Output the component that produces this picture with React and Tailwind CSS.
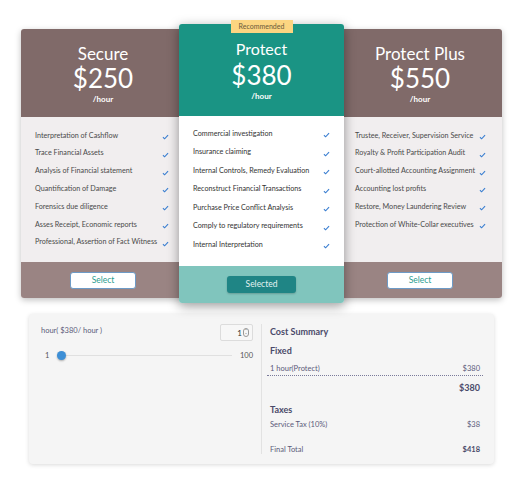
import React from "react";

const plans = [
  {
    name: "Secure",
    price: 250,
    features: [
      "Interpretation of Cashflow",
      "Trace Financial Assets",
      "Analysis of Financial statement",
      "Quantification of Damage",
      "Forensics due diligence",
      "Asses Receipt, Economic reports",
      "Professional, Assertion of Fact Witness",
    ],
  },
  {
    name: "Protect",
    price: 380,
    recommended: true,
    features: [
      "Commercial investigation",
      "Insurance claiming",
      "Internal Controls, Remedy Evaluation",
      "Reconstruct Financial Transactions",
      "Purchase Price Conflict Analysis",
      "Comply to regulatory requirements",
      "Internal Interpretation",
    ],
  },
  {
    name: "Protect Plus",
    price: 550,
    features: [
      "Trustee, Receiver, Supervision Service",
      "Royalty & Profit Participation Audit",
      "Court-allotted Accounting Assignment",
      "Accounting lost profits",
      "Restore, Money Laundering Review",
      "Protection of White-Collar executives",
    ],
  },
];

function Check() {
  return (
    <svg width="7" height="6" viewBox="0 0 8 7" className="shrink-0 mt-[2px]">
      <path d="M1 3.8 L3 5.6 L7 1.2" fill="none" stroke="#3b7fd1" strokeWidth="1.3" />
    </svg>
  );
}

function SideCard({ plan, padLeft }) {
  return (
    <div className="w-[164px] h-[269px] rounded-[3px] overflow-hidden shadow-[0_2px_6px_rgba(0,0,0,0.25)] flex flex-col">
      <div className="h-[88px] bg-[#806a69] flex flex-col items-center text-white pt-[14px]">
        <div className="text-[17px] leading-[21px]">{plan.name}</div>
        <div className="text-[26px] leading-[28px]">${plan.price}</div>
        <div className="text-[8px] font-bold leading-[10px] mt-[2px]">/hour</div>
      </div>
      <div className={`flex-1 bg-[#f1eeef] pt-[14px] pr-[16px] flex flex-col gap-[7.8px] ${padLeft}`}>
        {plan.features.map((f) => (
          <div key={f} className="flex items-center justify-between h-[10px] text-[7.2px] text-[#4a4a4a]">
            <span>{f}</span>
            <Check />
          </div>
        ))}
      </div>
      <div className="h-[36px] bg-[#9a8483] flex items-center justify-center">
        <button className="w-[66px] h-[17px] bg-white rounded-[3px] border border-[#6d9bc7] text-[#2a9d8f] text-[8.5px]">
          Select
        </button>
      </div>
    </div>
  );
}

function MainCard({ plan }) {
  return (
    <div className="relative z-10 -mx-[6px] w-[165px] h-[279px] rounded-[3px] bg-white shadow-[0_3px_12px_rgba(0,0,0,0.4)] flex flex-col">
      <div className="absolute -top-[4px] left-1/2 -translate-x-1/2 w-[62px] h-[13px] bg-[#fcd581] text-[7px] text-[#6b5a3a] flex items-center justify-center">
        Recommended
      </div>
      <div className="h-[92px] bg-[#1a9484] rounded-t-[3px] flex flex-col items-center text-white pt-[14px]">
        <div className="text-[16px] leading-[22px]">{plan.name}</div>
        <div className="text-[26px] leading-[30px]">${plan.price}</div>
        <div className="text-[8px] font-bold leading-[10px] mt-[1px]">/hour</div>
      </div>
      <div className="flex-1 bg-white pt-[13px] px-[14px] flex flex-col gap-[8.5px]">
        {plan.features.map((f) => (
          <div key={f} className="flex items-center justify-between h-[10px] text-[7.2px] text-[#333]">
            <span>{f}</span>
            <Check />
          </div>
        ))}
      </div>
      <div className="h-[37px] bg-[#80c5bd] rounded-b-[3px] flex items-center justify-center">
        <button className="w-[69px] h-[17px] rounded-[3px] bg-[#1f8585] text-[#e4f3f1] text-[8.5px] shadow-[0_1px_2px_rgba(0,0,0,0.2)]">
          Selected
        </button>
      </div>
    </div>
  );
}

export default function App() {
  return (
    <div className="w-[530px] h-[491px] bg-white font-['Lato','Noto_Sans',sans-serif] overflow-hidden">
      <div className="flex items-center ml-[21px] pt-[24px]">
        <SideCard plan={plans[0]} padLeft="pl-[14px]" />
        <MainCard plan={plans[1]} />
        <SideCard plan={plans[2]} padLeft="pl-[17px]" />
      </div>

      <div className="ml-[29px] mt-[11px] w-[465px] h-[150px] bg-[#f5f5f5] rounded-[4px] shadow-[0_1px_4px_rgba(0,0,0,0.15)] flex py-[10px]">
        <div className="w-[233px] border-r border-[#e2e2e2] pl-[12px] pr-[8px]">
          <div className="flex justify-between items-start">
            <span className="text-[7.5px] text-[#5b5b7a] mt-[1px]">hour( $380/ hour )</span>
            <div className="w-[33px] h-[17px] border border-[#dcdcdc] rounded-[2px] bg-[#f7f7f7] flex items-center justify-end pr-[3px] gap-[1px] text-[8px] text-[#333]">
              1
              <span className="flex flex-col items-center justify-center w-[6px] h-[9px] border border-[#999] rounded-full text-[4px] leading-[4px] text-[#555]">
                <span>˄</span>
                <span>˅</span>
              </span>
            </div>
          </div>
          <div className="flex items-center mt-[9px] text-[7.5px] text-[#555]">
            <span className="w-[16px] pl-[4px]">1</span>
            <div className="relative flex-1 h-[1px] bg-[#e0e0e0] mr-[8px]">
              <span className="absolute -top-[4px] left-0 w-[9px] h-[9px] rounded-full bg-[#3d8fd6] shadow-[0_1px_2px_rgba(0,0,0,0.3)]" />
            </div>
            <span>100</span>
          </div>
        </div>
        <div className="flex-1 pl-[8px] pr-[14px] text-[#5b5b7a]">
          <div className="text-[9px] font-bold text-[#4a4a6a] mt-[1px]">Cost Summary</div>
          <div className="text-[9px] font-bold text-[#4a4a6a] mt-[5px]">Fixed</div>
          <div className="flex justify-between text-[7.5px] mt-[6px] pb-[1px] border-b border-dotted border-[#7a7a9a] -mx-[3px] px-[3px]">
            <span>1 hour(Protect)</span>
            <span>$380</span>
          </div>
          <div className="text-right text-[9px] font-bold text-[#4a4a6a] mt-[5px]">$380</div>
          <div className="text-[9px] font-bold text-[#4a4a6a] mt-[8px]">Taxes</div>
          <div className="flex justify-between text-[7.5px] mt-[3px]">
            <span>Service Tax (10%)</span>
            <span>$38</span>
          </div>
          <div className="flex justify-between text-[7.5px] mt-[13px]">
            <span>Final Total</span>
            <span className="font-bold text-[#4a4a6a]">$418</span>
          </div>
        </div>
      </div>
    </div>
  );
}
